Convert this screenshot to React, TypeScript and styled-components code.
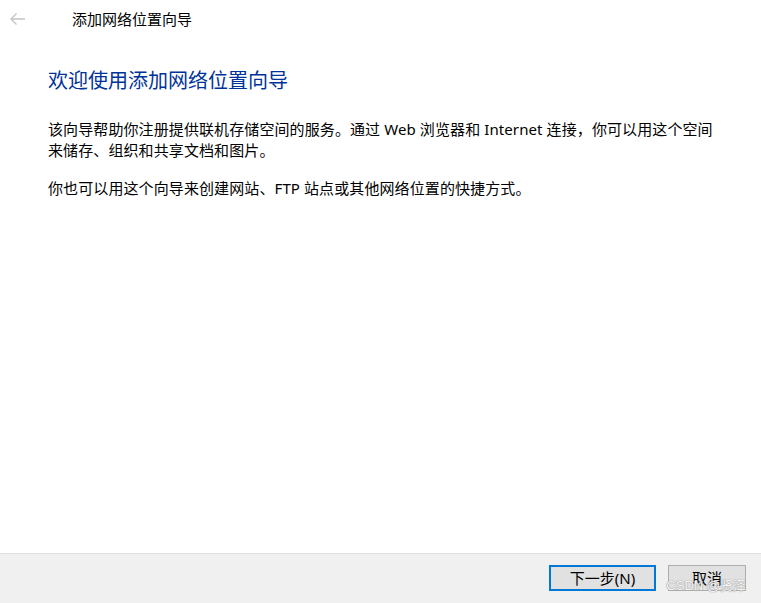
import * as React from 'react';
import styled, { createGlobalStyle } from 'styled-components';

const GlobalStyle = createGlobalStyle`
  html, body {
    margin: 0;
    padding: 0;
    background: #ffffff;
  }
  #root {
    height: 603px;
  }
`;

const Window = styled.div`
  width: 761px;
  height: 603px;
  display: flex;
  flex-direction: column;
  background: #ffffff;
  font-family: "Segoe UI", "Noto Sans", "Noto Sans CJK SC", sans-serif;
  color: #000000;
  position: relative;
  overflow: hidden;
`;

const TitleBar = styled.div`
  height: 38px;
  display: flex;
  align-items: center;
  padding-left: 9px;
`;

const BackButton = styled.div`
  width: 17px;
  height: 14px;
  display: flex;
  align-items: center;
  margin-right: 46px;
`;

const TitleText = styled.span`
  font-size: 15px;
  line-height: 20px;
  color: #000000;
`;

const Content = styled.div`
  flex: 1;
  padding: 29px 30px 0 48px;
`;

const Heading = styled.h1`
  margin: 0 0 24px;
  font-size: 20px;
  font-weight: normal;
  line-height: 28px;
  color: #003399;
`;

const Paragraph = styled.p`
  margin: 0 0 17px;
  font-size: 15px;
  line-height: 21px;
  max-width: 670px;
  letter-spacing: 0.1px;
`;

const Footer = styled.div`
  height: 50px;
  border-top: 1px solid #dfdfdf;
  background: #f0f0f0;
  display: flex;
  justify-content: flex-end;
  align-items: flex-start;
  gap: 12px;
  padding: 11px 15px 0 0;
  box-sizing: border-box;
`;

const Button = styled.button<{ primary?: boolean }>`
  height: 26px;
  width: ${({ primary }) => (primary ? '107px' : '78px')};
  box-sizing: border-box;
  background: #e1e1e1;
  border: ${({ primary }) => (primary ? '2px solid #0078d7' : '1px solid #adadad')};
  font-family: "Segoe UI", "Noto Sans", "Noto Sans CJK SC", sans-serif;
  font-size: 15px;
  line-height: 20px;
  color: #000000;
  padding: 0;
  margin: 0;
`;

// CSDN watermark stamped over the bottom-right corner
const Watermark = styled.span`
  position: absolute;
  right: 15px;
  bottom: 10px;
  font-family: "Liberation Sans", "Noto Sans CJK SC", sans-serif;
  font-size: 13px;
  line-height: 15px;
  color: rgba(255, 255, 255, 0.9);
  text-shadow: 0 0 1px #a8a8a8, 0 0 1px #a8a8a8, 0 0 1px #a8a8a8;
  pointer-events: none;
`;

const BackArrow = () => (
  <svg width="17" height="14" viewBox="0 0 17 14">
    <path d="M16 7H2M7.5 1.5L2 7l5.5 5.5" fill="none" stroke="#c4c4c4" strokeWidth="1.3" />
  </svg>
);

export default function App() {
  return (
    <>
      <GlobalStyle />
      <Window>
        <TitleBar>
          <BackButton>
            <BackArrow />
          </BackButton>
          <TitleText>添加网络位置向导</TitleText>
        </TitleBar>
        <Content>
          <Heading>欢迎使用添加网络位置向导</Heading>
          <Paragraph>
            该向导帮助你注册提供联机存储空间的服务。通过 Web 浏览器和 Internet 连接，你可以用这个空间来储存、组织和共享文档和图片。
          </Paragraph>
          <Paragraph>你也可以用这个向导来创建网站、FTP 站点或其他网络位置的快捷方式。</Paragraph>
        </Content>
        <Footer>
          <Button primary>下一步(N)</Button>
          <Button>取消</Button>
        </Footer>
        <Watermark>CSDN @贤泽</Watermark>
      </Window>
    </>
  );
}
